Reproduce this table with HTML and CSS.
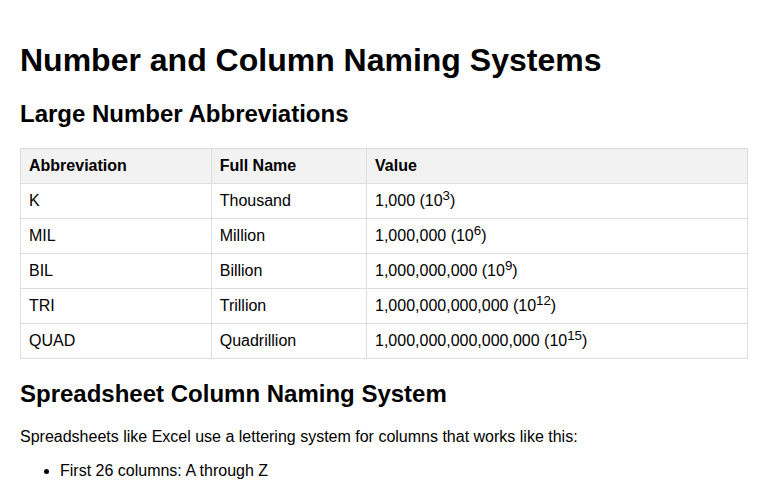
FILE: index.html
```html
<!DOCTYPE html>
<html>
<head>
<meta charset="utf-8">
<link rel="stylesheet" href="styles.css">
</head>
<body>
<h1>Number and Column Naming Systems</h1>
<h2>Large Number Abbreviations</h2>
<table class="nums">
<thead>
<tr><th>Abbreviation</th><th>Full Name</th><th>Value</th></tr>
</thead>
<tbody>
<tr><td>K</td><td>Thousand</td><td>1,000 (10<sup>3</sup>)</td></tr>
<tr><td>MIL</td><td>Million</td><td>1,000,000 (10<sup>6</sup>)</td></tr>
<tr><td>BIL</td><td>Billion</td><td>1,000,000,000 (10<sup>9</sup>)</td></tr>
<tr><td>TRI</td><td>Trillion</td><td>1,000,000,000,000 (10<sup>12</sup>)</td></tr>
<tr><td>QUAD</td><td>Quadrillion</td><td>1,000,000,000,000,000 (10<sup>15</sup>)</td></tr>
</tbody>
</table>
<h2>Spreadsheet Column Naming System</h2>
<p>Spreadsheets like Excel use a lettering system for columns that works like this:</p>
<ul>
<li>First 26 columns: A through Z</li>
</ul>
</body>
</html>
```
FILE: styles.css
```css
body {
  margin: 0;
  padding: 21px 20px 20px;
  font-family: "Liberation Sans", Arial, sans-serif;
  color: #000;
  background: #fff;
}
h1 {
  font-size: 32px;
  margin: 21px 0;
}
h2 {
  font-size: 24px;
  margin: 20px 0;
}
table.nums {
  width: 100%;
  border-collapse: collapse;
  margin: 20px 0 21px;
  font-size: 16px;
}
.nums th, .nums td {
  border: 1px solid #ddd;
  padding: 8px;
  text-align: left;
}
.nums th {
  background: #f2f2f2;
  font-weight: bold;
}
.nums sup {
  line-height: 0;
}
p {
  font-size: 16px;
  margin: 16px 0;
}
ul {
  margin: 16px 0;
  padding-left: 40px;
}
```
